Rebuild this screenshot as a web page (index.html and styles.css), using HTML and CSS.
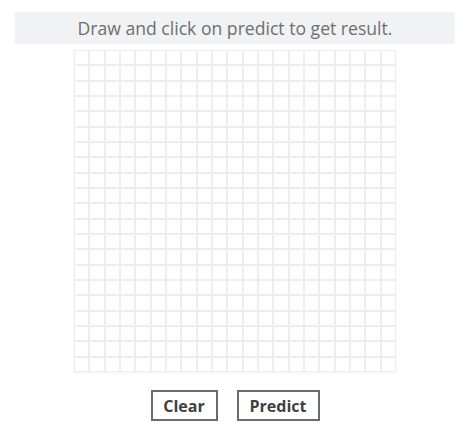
FILE: index.html
```html
<!DOCTYPE html>
<html>
<head>
<meta charset="utf-8">
<link rel="stylesheet" href="styles.css">
</head>
<body>
<div class="app">
  <div class="banner">Draw and click on predict to get result.</div>
  <div class="board" id="board"></div>
  <div class="actions">
    <button class="btn btn-clear">Clear</button>
    <button class="btn btn-predict">Predict</button>
  </div>
</div>
<script>
  var b = document.getElementById('board');
  for (var i = 0; i < 441; i++) {
    var c = document.createElement('div');
    c.className = 'cell';
    b.appendChild(c);
  }
</script>
</body>
</html>
```
FILE: styles.css
```css
html, body {
  margin: 0;
  padding: 0;
  background: #ffffff;
}
.app {
  width: 440px;
  margin: 12px 0 0 15px;
  display: flex;
  flex-direction: column;
  align-items: center;
  font-family: "Open Sans", "Noto Sans", sans-serif;
}
.banner {
  width: 100%;
  height: 32px;
  background: #f1f2f3;
  color: #6d6f72;
  font-size: 17.6px;
  line-height: 32px;
  text-align: center;
}
.board {
  margin-top: 6px;
  width: 322px;
  height: 322px;
  box-sizing: border-box;
  padding: 1px;
  gap: 2px;
  background: #eeeeee;
  display: grid;
  grid-template-columns: repeat(21, 1fr);
  grid-template-rows: repeat(21, 1fr);
  box-shadow: 0 1px 2px rgba(0,0,0,0.05);
}
.cell {
  background: #ffffff;
}
.actions {
  margin-top: 18px;
  display: flex;
  gap: 19px;
}
.btn {
  font-family: "Open Sans", "Noto Sans", sans-serif;
  font-weight: 700;
  font-size: 16px;
  color: #3f4043;
  background: #ffffff;
  border: 2px solid #6a6b6e;
  border-radius: 0;
  height: 31px;
  padding: 0;
  cursor: pointer;
}
.btn-clear { width: 67px; }
.btn-predict { width: 83px; }
```
